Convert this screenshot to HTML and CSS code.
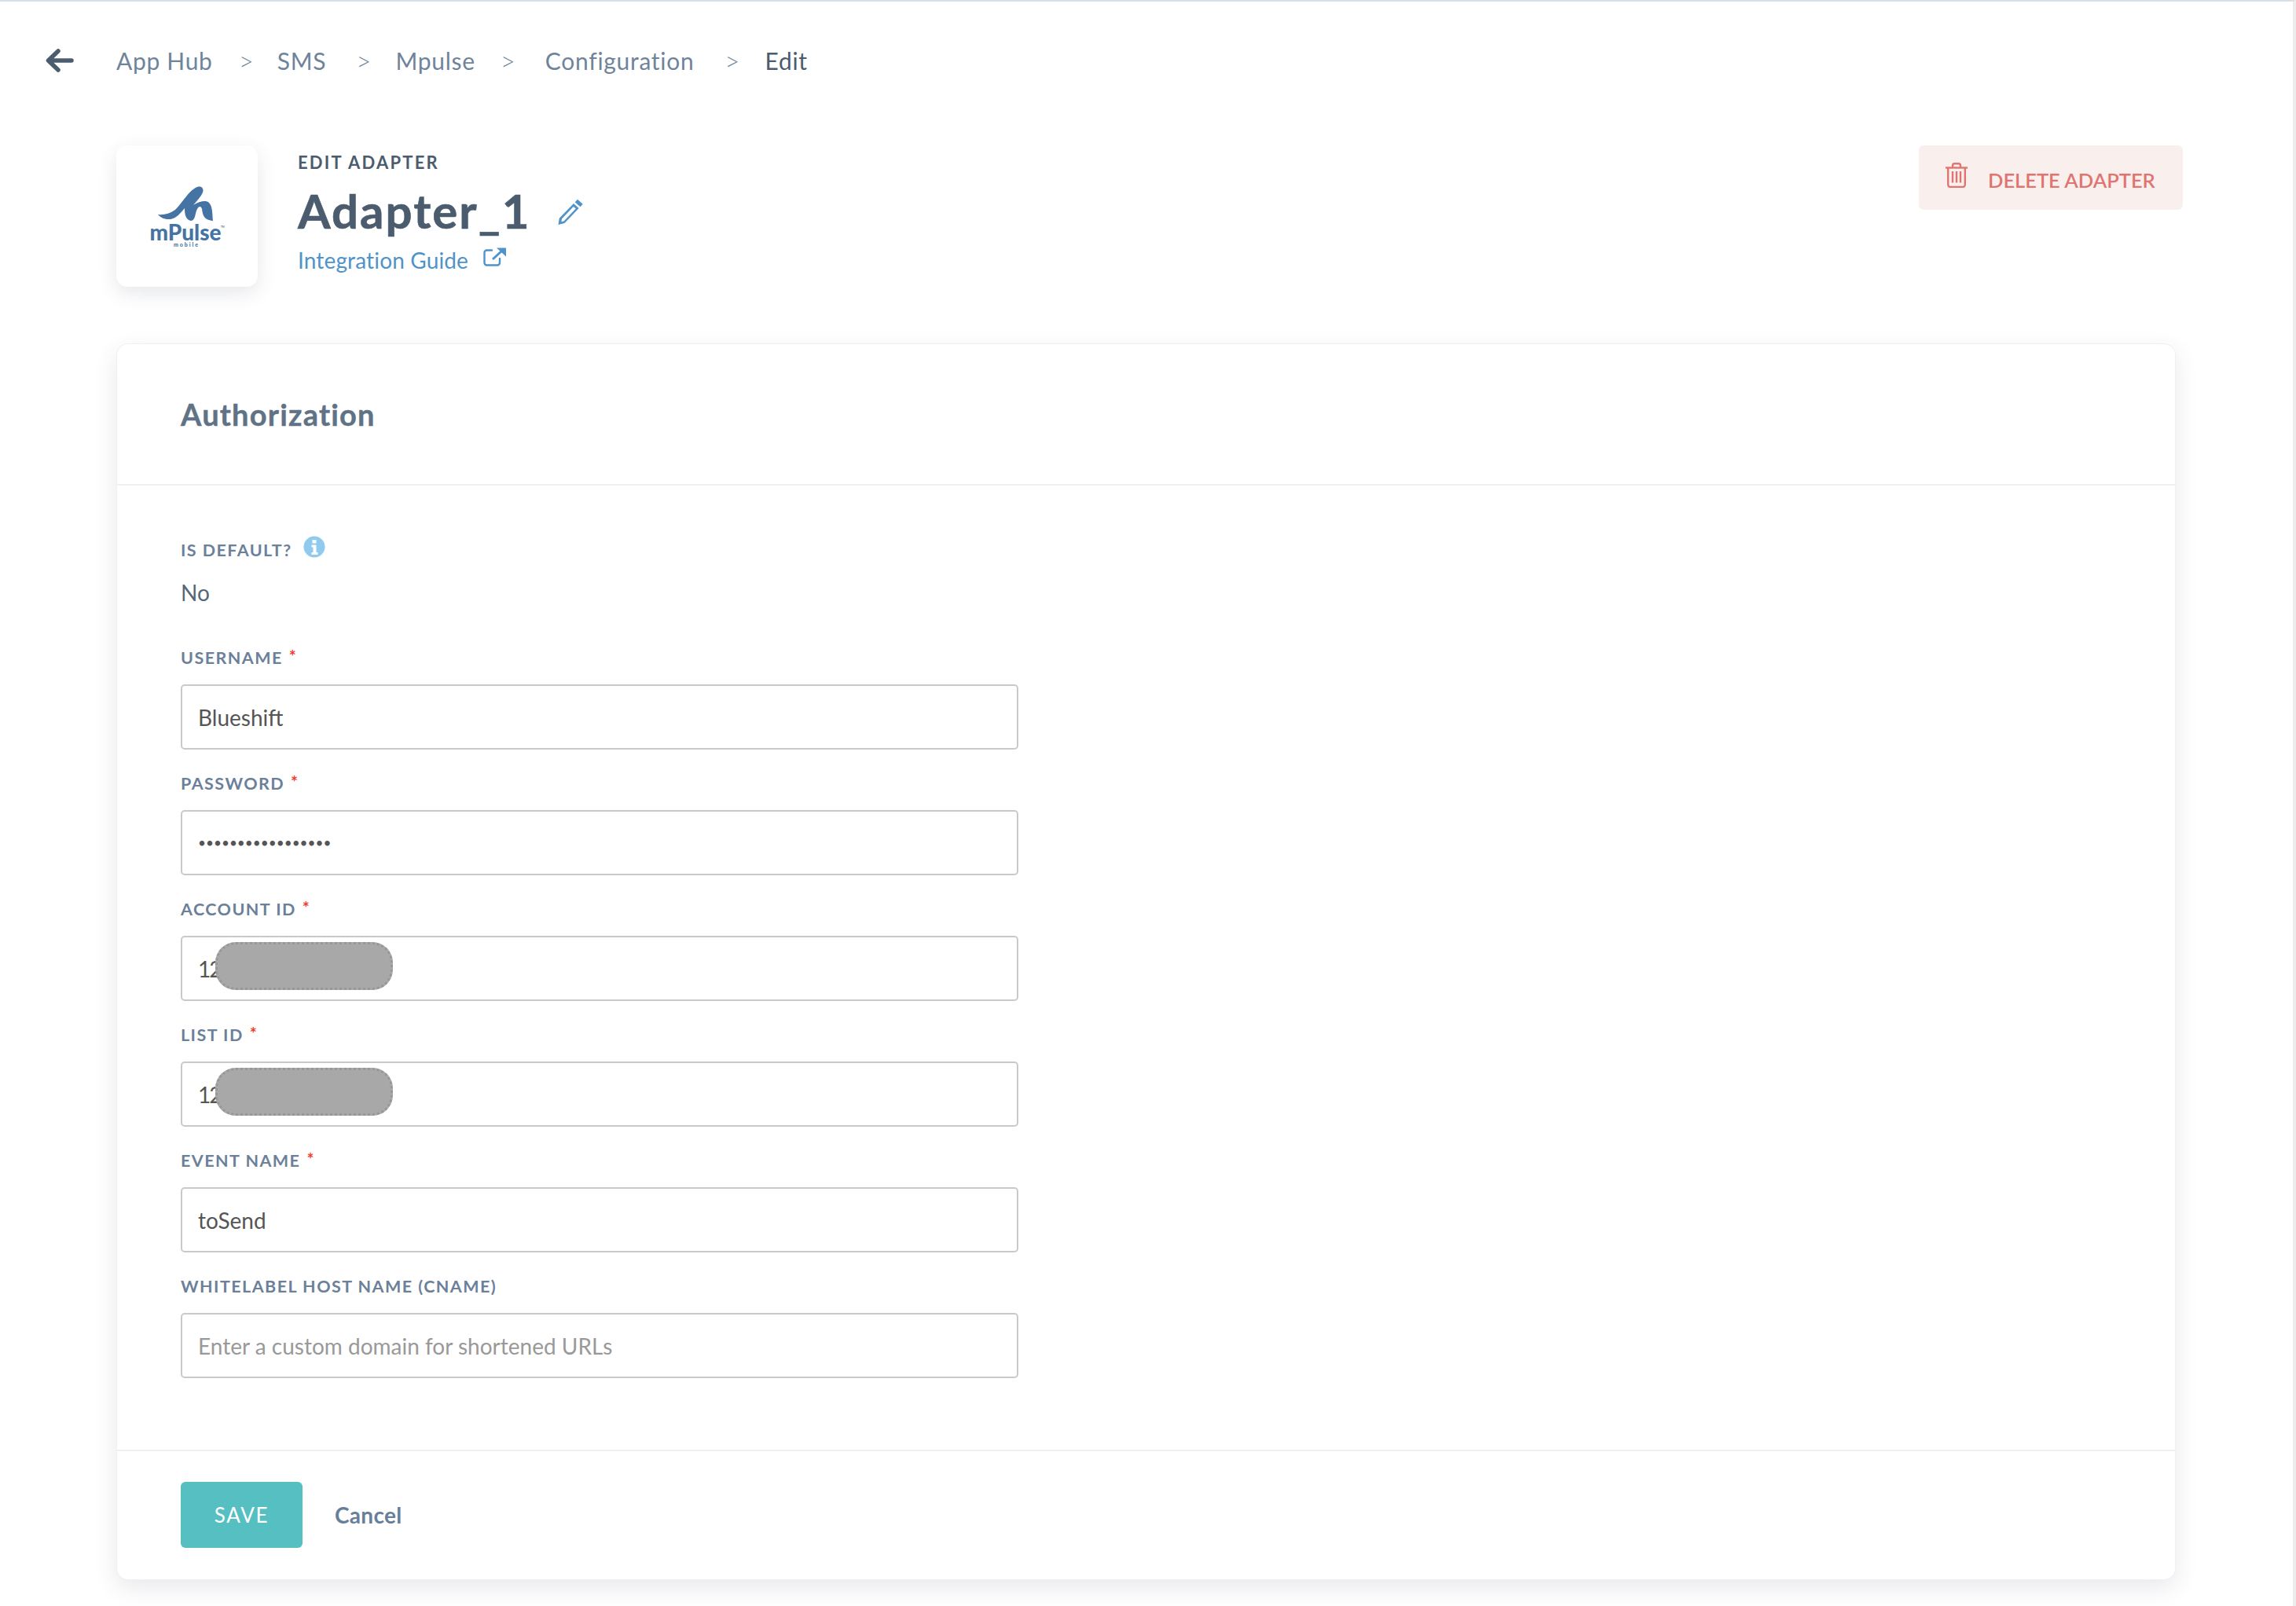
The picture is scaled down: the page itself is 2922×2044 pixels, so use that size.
FILE: index.html
```html
<!DOCTYPE html>
<html lang="en">
<head>
<meta charset="utf-8">
<title>Edit Adapter</title>
<link rel="stylesheet" href="styles.css">
</head>
<body>
<div class="page">
  <nav class="crumbs">
    <svg class="back" viewBox="0 0 36 30" width="36" height="30"><path d="M33 15H4M16 3 3.500 15 16 27" fill="none" stroke="#4b5c6e" stroke-width="5.500" stroke-linecap="round" stroke-linejoin="round"/></svg>
    <a class="crumb c1">App Hub</a><span class="sep s1">&gt;</span>
    <a class="crumb c2">SMS</a><span class="sep s2">&gt;</span>
    <a class="crumb c3">Mpulse</a><span class="sep s3">&gt;</span>
    <a class="crumb c4">Configuration</a><span class="sep s4">&gt;</span>
    <span class="crumb current">Edit</span>
  </nav>

  <header class="head">
    <div class="logo">
      <svg viewBox="0 0 105 90" width="105" height="90">
        <path fill="#4574a4" d="M15 43C19 48 25 49.500 31 49C38 48 44 41 49 35C49 42 50 50 57 51C63 51 62 41 65 36C67 32 70 32 71 36C72 43 73 50 85 51C84 44 85 33 80 28C76 24.500 68 26 60 31C66 24 73 17 72.500 11.500C71.500 7 67 6.500 62 9.500C53 15 46 28 37 37C30 42 22 44 15 43Z"/>
        <text class="logo-main" x="4.500" y="76" textLength="91" lengthAdjust="spacingAndGlyphs">mPulse</text>
        <text class="logo-tm" x="95" y="60">TM</text>
        <text class="logo-sub" x="35" y="84" textLength="31">mobile</text>
      </svg>
    </div>
    <div class="head-text">
      <div class="eyebrow">EDIT ADAPTER</div>
      <h1 class="title">Adapter_1<svg class="pencil" viewBox="0 0 32 33" width="32" height="33"><path fill="#4f93c9" d="M25 .800 31.700 6.800 28.500 10.300 21.700 4.200ZM20 6 26.700 12 8.500 31 .500 33 1.800 24.700ZM19.800 10 5 25.500 4.400 29.200 7.600 28.400 22.800 12.500Z" fill-rule="evenodd"/></svg></h1>
      <a class="guide">Integration Guide<svg class="ext" viewBox="0 0 30 24" width="30" height="24"><path fill="none" stroke="#4f93c9" stroke-width="2.400" stroke-linecap="round" d="M11 3.500H4.500A3 3 0 0 0 1.500 6.500V19.500A3 3 0 0 0 4.500 22.500H18A3 3 0 0 0 21 19.500V14"/><path fill="none" stroke="#4f93c9" stroke-width="3" d="M12 15 24 4"/><path fill="#4f93c9" d="M17 .500H29V11.500Z"/></svg></a>
    </div>
    <button class="delete">
      <svg class="trash" viewBox="0 0 28 32" width="28" height="32"><g fill="none" stroke="#e07470" stroke-width="2.400"><path d="M0 6.500H28"/><path d="M9 6V3.500A2.500 2.500 0 0 1 11.500 1.200H16.500A2.500 2.500 0 0 1 19 3.500V6"/><path d="M3.200 6.500V28A3 3 0 0 0 6.200 31H21.800A3 3 0 0 0 24.800 28V6.500"/><path d="M9 11V25.500M14 11V25.500M19 11V25.500"/></g></svg>
      <span>DELETE ADAPTER</span>
    </button>
  </header>

  <main class="card">
    <div class="card-head"><h2>Authorization</h2></div>
    <form class="card-body">
      <div class="default-row">
        <label class="label">IS DEFAULT?<svg class="info" viewBox="0 0 28 28" width="28" height="28"><circle cx="14" cy="14" r="13.500" fill="#90cbef"/><path fill="#fff" d="M11.500 5h5v4.500h-5zM10.500 11.500h6v9.500h2v3h-8v-3h2v-6.500h-2z"/></svg></label>
        <div class="value">No</div>
      </div>
      <div class="field"><label class="label">USERNAME<i>*</i></label><input class="input" value="Blueshift"></div>
      <div class="field"><label class="label">PASSWORD<i>*</i></label><input class="input pw" type="password" value="aaaaaaaaaaaaaaaaa"></div>
      <div class="field"><label class="label">ACCOUNT ID<i>*</i></label><div class="wrap"><input class="input" value="12"><span class="redact"></span></div></div>
      <div class="field"><label class="label">LIST ID<i>*</i></label><div class="wrap"><input class="input" value="12"><span class="redact"></span></div></div>
      <div class="field"><label class="label">EVENT NAME<i>*</i></label><input class="input" value="toSend"></div>
      <div class="field last"><label class="label">WHITELABEL HOST NAME (CNAME)</label><input class="input" placeholder="Enter a custom domain for shortened URLs"></div>
    </form>
    <footer class="card-foot">
      <button class="save">SAVE</button>
      <a class="cancel">Cancel</a>
    </footer>
  </main>
</div>
</body>
</html>
```
FILE: styles.css
```css
* { box-sizing: border-box; }
html, body { margin: 0; padding: 0; background: #fff; }
body { font-family: Lato, "Open Sans", sans-serif; font-variant-ligatures: none; overflow: hidden; width: 2922px; height: 2044px; }
.page { width: 2922px; height: 2044px; border-top: 2px solid #d8dfe5; border-right: 4px solid #ececec; }

.crumbs { display: flex; align-items: center; height: 30px; margin-top: 60px; padding-left: 58px; font-size: 30px; letter-spacing: .7px; color: #6f849b; }
.back { display: block; margin-right: 54px; }
.sep { font-size: 33px; font-weight: 300; letter-spacing: 0; color: #6f849b; }
.c1, .c2, .c3, .c4 { white-space: nowrap; }
.s1 { margin: 0 30px 0 33px; }
.s2 { margin: 0 31px 0 38px; }
.s3 { margin: 0 38px 0 32px; }
.s4 { margin: 0 32px 0 39px; }
.current { color: #4b5c6e; }

.head { display: flex; align-items: flex-start; margin: 93px 140px 0 148px; }
.logo { width: 180px; height: 180px; flex: none; display: flex; align-items: center; justify-content: center; background: #fff; border-radius: 14px; box-shadow: 0 8px 24px rgba(50, 60, 80, .12); }
.logo-main { font: 900 28px Lato, sans-serif; fill: #4574a4; }
.logo-tm { font: 700 3px Lato, sans-serif; fill: #4574a4; }
.logo-sub { font: 900 7px Lato, sans-serif; fill: #4574a4; }
.head-text { margin-left: 51px; flex: 1; }
.eyebrow { margin-top: 9px; font-size: 22px; line-height: 26px; font-weight: 700; letter-spacing: 2.200px; color: #4b5c6e; }
.title { display: flex; align-items: center; margin: 13px 0 0; font-size: 60px; line-height: 70px; font-weight: 700; letter-spacing: 2px; color: #4b5c6e; -webkit-text-stroke: .6px #4b5c6e; }
.pencil { margin-left: 34px; margin-top: 2px; }
.guide { display: flex; align-items: center; margin-top: 10px; font-size: 28px; line-height: 36px; letter-spacing: .15px; color: #4f93c9; }
.ext { margin-left: 19px; margin-top: -8px; }

.delete { display: flex; align-items: center; width: 336px; height: 82px; padding: 0 0 0 34px; background: #f9f0ee; border: 0; border-radius: 6px; font: 600 25.500px Lato, sans-serif; color: #e07470; }
.delete span { margin-left: 26px; padding-top: 6px; white-space: nowrap; }
.trash { margin-top: -6px; }

.card { width: 2619px; height: 1572px; margin: 73px 0 0 149px; background: #fff; border-radius: 14px; box-shadow: 0 0 0 1px #eef0f4, 0 10px 30px rgba(50, 60, 80, .12); }
.card-head { height: 180px; padding: 65px 81px 0; border-bottom: 2px solid #eeeff3; }
.card-head h2 { margin: 0; font-size: 38px; line-height: 48px; font-weight: 700; letter-spacing: 1.200px; color: #5f7286; -webkit-text-stroke: .4px #5f7286; }
.card-body { height: 1229px; padding: 67px 81px 0; border-bottom: 2px solid #eeeff3; }
.label { display: flex; align-items: center; gap: 8px; height: 30px; font-size: 21.500px; font-weight: 700; letter-spacing: 1.450px; color: #6b8099; }
.label i { font-style: normal; color: #f03c2e; margin-top: -4px; }
.info { margin-left: 6px; margin-top: -8px; }
.value { margin: 19px 0 48px; font-size: 28px; line-height: 40px; color: #556678; }
.field { margin-bottom: 28px; }
.field .label { margin-bottom: 19px; }
.input { display: block; width: 1066px; height: 83px; padding: 0 20px; background: #fff; border: 2px solid #c8c9cb; border-radius: 5px; outline: 0; font: 400 28px Lato, sans-serif; color: #555; }
.input::placeholder { color: #999; opacity: 1; }
.pw { font-size: 17.200px; }
.wrap { position: relative; }
.wrap .input { letter-spacing: -2px; }
.redact { position: absolute; left: 44px; top: 8px; width: 226px; height: 61px; background: #a8a8a8; border: 3px dotted #979797; border-radius: 26px; }
.card-foot { display: flex; align-items: center; padding: 39px 81px 0; }
.save { width: 155px; height: 84px; background: #55bfc1; border: 0; border-radius: 6px; font: 400 26px Lato, sans-serif; letter-spacing: 1.700px; color: #fff; }
.cancel { margin-left: 41px; font-size: 28px; font-weight: 700; letter-spacing: .3px; color: #687f99; }
```
